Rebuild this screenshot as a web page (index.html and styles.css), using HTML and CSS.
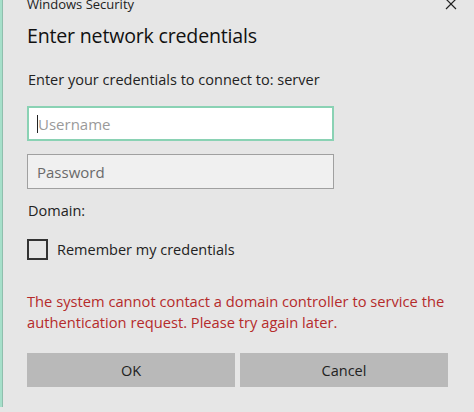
FILE: index.html
```html
<!DOCTYPE html>
<html>
<head>
<meta charset="utf-8">
<link rel="stylesheet" href="styles.css">
</head>
<body>
<div class="dialog">
  <div class="titlebar">
    <span class="app">Windows Security</span>
    <span class="close">
      <svg width="12" height="12" viewBox="0 0 12 12"><path d="M1 1 L11 11 M11 1 L1 11" stroke="#222" stroke-width="1.2" fill="none"/></svg>
    </span>
  </div>
  <div class="content">
    <h1 class="heading">Enter network credentials</h1>
    <p class="intro">Enter your credentials to connect to: server</p>
    <div class="field focused"><span class="caret"></span><span class="ph">Username</span></div>
    <div class="field"><span class="ph dark">Password</span></div>
    <p class="domain">Domain:</p>
    <label class="check"><span class="box"></span><span>Remember my credentials</span></label>
    <p class="error">The system cannot contact a domain controller to service the authentication request. Please try again later.</p>
    <div class="buttons">
      <button class="btn">OK</button>
      <button class="btn">Cancel</button>
    </div>
  </div>
</div>
</body>
</html>
```
FILE: styles.css
```css
html, body {
  margin: 0;
  padding: 0;
  background: #e6e6e6;
}
body {
  font-family: "Open Sans", "Noto Sans", sans-serif;
  color: #1a1a1a;
  width: 474px;
  height: 412px;
  overflow: hidden;
}
.dialog {
  height: 412px;
  box-sizing: border-box;
  border-left: 2px solid #a6dfca;
  box-shadow: inset 1px 0 0 #8fbfad;
}
.titlebar {
  display: flex;
  justify-content: space-between;
  align-items: flex-start;
  height: 18px;
  margin-top: -5px;
  padding: 0 17px 0 25px;
}
.app {
  font-size: 13px;
  color: #222;
}
.close {
  display: flex;
  margin-top: 3px;
}
.content {
  padding: 0 26px 0 25px;
}
.heading {
  margin: 9px 0 0;
  font-size: 19.6px;
  font-weight: 400;
  color: #111;
  letter-spacing: -0.2px;
  line-height: 28px;
}
.intro {
  margin: 20px 0 0 1px;
  font-size: 14.5px;
  line-height: 20px;
  color: #222;
}
.field {
  box-sizing: border-box;
  width: 307px;
  height: 35px;
  margin-top: 16px;
  border: 1px solid #a0a0a0;
  background: #f0f0f0;
  display: flex;
  align-items: center;
  padding-left: 9px;
  font-size: 15px;
}
.field + .field {
  margin-top: 13px;
}
.field.focused {
  border: 2px solid #8ad2b4;
  background: #fff;
  padding-left: 8px;
}
.caret {
  width: 1px;
  height: 18px;
  background: #222;
}
.ph {
  color: #9a9a9a;
}
.ph.dark {
  color: #6a6a6a;
}
.domain {
  margin: 12px 0 0 1px;
  font-size: 14.5px;
  line-height: 20px;
  color: #222;
}
.check {
  display: flex;
  align-items: center;
  margin-top: 18px;
  font-size: 14.5px;
  color: #222;
}
.box {
  box-sizing: border-box;
  width: 21px;
  height: 21px;
  border: 2px solid #333;
  margin-right: 9px;
}
.error {
  margin: 31px 0 0;
  font-size: 14.7px;
  line-height: 21px;
  color: #b52b2b;
}
.buttons {
  display: flex;
  gap: 5px;
  margin-top: 20px;
  width: 421px;
}
.btn {
  flex: 1;
  height: 34px;
  border: none;
  background: #b9b9b9;
  font-family: inherit;
  font-size: 14.5px;
  color: #222;
  padding: 0;
}
```
